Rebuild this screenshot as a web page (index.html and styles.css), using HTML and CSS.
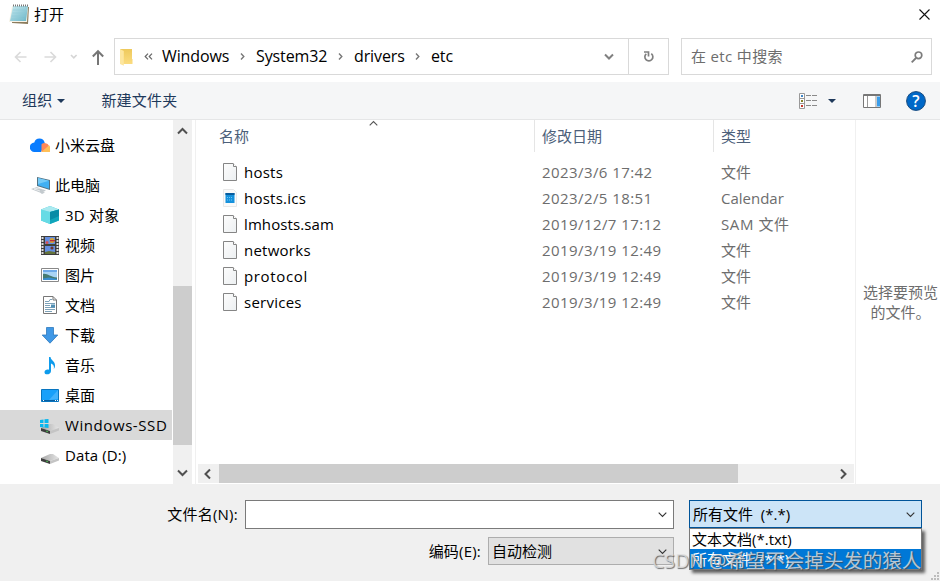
FILE: index.html
```html
<!DOCTYPE html>
<html lang="zh-CN">
<head>
<meta charset="utf-8">
<title>打开</title>
<link rel="stylesheet" href="styles.css">
</head>
<body>
<svg class="defs" width="0" height="0">
  <defs>
    <linearGradient id="paper" x1="0" y1="0" x2="1" y2="1"><stop offset="0" stop-color="#fdfdfd"/><stop offset="1" stop-color="#eceff1"/></linearGradient>
    <linearGradient id="pad" x1="0" y1="0" x2="1" y2="1"><stop offset="0" stop-color="#c9eaf0"/><stop offset="1" stop-color="#68b4c6"/></linearGradient>
    <linearGradient id="gold" x1="0" y1="0" x2="0" y2="1"><stop offset="0" stop-color="#eec95c"/><stop offset="1" stop-color="#fbdc80"/></linearGradient>
    <linearGradient id="metal" x1="0" y1="0" x2="1" y2="0"><stop offset="0" stop-color="#a6a6a6"/><stop offset="1" stop-color="#e6e6e6"/></linearGradient>
    <symbol id="doc" viewBox="0 0 14 18"><path d="M.5.5h9.500l3.500 3.500v13.500h-13z" fill="url(#paper)" stroke="#858585"/><path d="M10.500.5v3h3" fill="#fff" stroke="#858585"/></symbol>
    <symbol id="drive" viewBox="0 0 18 11"><path d="M0 5 9 1h3l6 4-9 3z" fill="url(#metal)"/><path d="M0 5l9 3v3L0 8z" fill="#3d3d3d"/><path d="M9 8l9-3v2.500L9 11z" fill="#c4c4c4"/><path d="M5 7.500l2 .7v1l-2-.7z" fill="#4cba50"/></symbol>
    <symbol id="chev" viewBox="0 0 9 6"><path d="M.7.7l3.800 3.800L8.300.7" fill="none" stroke="currentColor" stroke-width="1.100"/></symbol>
    <symbol id="arrow" viewBox="0 0 11 8"><path d="M1 1.500l4.500 4.500L10 1.500" fill="none" stroke="#505050" stroke-width="2"/></symbol>
    <symbol id="sep" viewBox="0 0 5 7"><path d="M1 .6l2.800 2.900L1 6.400" fill="none" stroke="#777" stroke-width="1.400"/></symbol>
  </defs>
</svg>
<div class="dialog">
  <header class="title">
    <svg class="notepad" width="21" height="20" viewBox="0 0 21 20"><path d="M4 2l16 1-1 17-16-1z" fill="#8b7b5c"/><path d="M3 2h16l-1 16H0z" fill="#f6f3e7"/><path d="M4 2h15l-2 15H1z" fill="url(#pad)"/><path d="M4 6h13M3.500 9h13M3 12h13M2.500 15h13" stroke="#8ecbd7" stroke-width=".6"/><path d="M4 1.500h15" stroke="#777" stroke-width="2" stroke-dasharray="1 1"/></svg>
    <span class="title-text">打开</span>
    <svg class="close" width="11" height="11" viewBox="0 0 11 11"><path d="M.5.5l10 10M10.500.5l-10 10" stroke="#111" stroke-width="1.100"/></svg>
  </header>

  <nav class="nav">
    <svg class="history" width="92" height="18" viewBox="0 0 92 18"><g fill="none"><path d="M12.500 9H1.500M6.500 4l-5 5 5 5M30.500 9h11M36.500 4l5 5-5 5" stroke="#dadada" stroke-width="1.600"/><path d="M57 7l2.800 2.800L62.600 7" stroke="#d5d5d5" stroke-width="1.600"/><path d="M84 17V3.500M78.800 8.500L84 3.200l5.200 5.300" stroke="#767676" stroke-width="2"/></g></svg>
    <div class="address">
      <svg class="folder" width="13" height="18" viewBox="0 0 13 18"><path d="M0 1h12v10h.5v5H3z" fill="url(#gold)"/><path d="M0 1l3.800 2v14.700L0 16z" fill="#fde69f"/></svg>
      <svg class="back" width="9" height="7" viewBox="0 0 9 7"><path d="M4 .6L1.200 3.500 4 6.400M8 .6L5.200 3.500 8 6.400" fill="none" stroke="#666" stroke-width="1.200"/></svg>
      <span class="crumb c-win">Windows</span><svg class="sep" width="5" height="7"><use href="#sep"/></svg>
      <span class="crumb c-sys">System32</span><svg class="sep" width="5" height="7"><use href="#sep"/></svg>
      <span class="crumb c-drv">drivers</span><svg class="sep" width="5" height="7"><use href="#sep"/></svg>
      <span class="crumb c-etc">etc</span>
      <svg class="drop" width="10" height="8" viewBox="0 0 10 8"><path d="M1 1.500l4 4 4-4" fill="none" stroke="#808080" stroke-width="2"/></svg>
      <div class="refresh"><svg width="12" height="13" viewBox="0 0 12 13"><path d="M8.300 3.700a4 4 0 1 1-5 .1" fill="none" stroke="#808080" stroke-width="1.700"/><path d="M1 2h4.500v4.500" fill="none" stroke="#808080" stroke-width="1.700"/></svg></div>
    </div>
    <div class="search"><span>在 etc 中搜索</span><svg width="12" height="12" viewBox="0 0 12 12"><circle cx="7.500" cy="4.300" r="3.300" fill="none" stroke="#7c7c7c" stroke-width="1.700"/><path d="M5 7l-4.300 4.300" stroke="#7c7c7c" stroke-width="1.800"/></svg></div>
  </nav>

  <div class="toolbar">
    <span class="organize">组织</span><i class="tri"></i>
    <span class="newdir">新建文件夹</span>
    <svg class="viewmode" width="18" height="16" viewBox="0 0 18 16"><path d="M.5.5h5v15h-5zM.5 5.500h5M.5 10.500h5" fill="#fff" stroke="#999"/><path d="M7 2.500h5m1 0h5M7 7.500h5m1 0h5M7 12.500h5m1 0h5" stroke="#8a8a8a"/><path d="M2 2h2v2H2z" fill="#3f87c8"/><path d="M2 7h2v2H2z" fill="#85852a"/><path d="M2 12h2v2H2z" fill="#c6382d"/></svg>
    <i class="tri tri-view"></i>
    <svg class="panes" width="18" height="14" viewBox="0 0 18 14"><path d="M.5.5h17v13H.5z" fill="#fff" stroke="#777"/><path d="M1 1.500h16" stroke="#777"/><path d="M4.500 2v11M13 2v11" stroke="#999"/><path d="M14 2.500h3v10h-3z" fill="#3c9eeb"/></svg>
    <svg class="help" width="20" height="20" viewBox="0 0 20 20"><circle cx="10" cy="10" r="9.400" fill="#0068c8" stroke="#174a7e"/><text x="10" y="15.700" text-anchor="middle" class="help-mark">?</text></svg>
  </div>

  <main class="main">
    <aside class="tree">
      <div class="node cloud"><svg width="20" height="14" viewBox="0 0 20 14"><path d="M4.700 14a4.700 4.700 0 0 1-.4-9.400A5.300 5.300 0 0 1 14.600 4.600L15 6l-4 8z" fill="#087cff"/><path d="M11.500 6.200a5 5 0 0 1 7.500 1.500L12.500 14h-1z" fill="#ff8858"/><path d="M11.500 14l7.500-6.500a4 4 0 0 1 .8 6.500z" fill="#ffc058"/></svg><span>小米云盘</span></div>
      <div class="node pc"><svg width="20" height="17" viewBox="0 0 20 17"><path d="M6 0l13 3v10L6 9z" fill="#527283"/><path d="M7 1l11 2.700v8L7 8.300z" fill="#41b0f3"/><path d="M7 1l11 2.700L7 7z" fill="#76cbf7"/><path d="M0 12l6-2 9 3.500-5 2.500zM9 15.500l2-1 3 1-3 1.500z" fill="#c3cace"/><path d="M3 12l5-1 4 1M3 12l6 2" stroke="#fff" stroke-width=".6" fill="none"/></svg><span>此电脑</span></div>
      <div class="node sub"><svg width="18" height="18" viewBox="0 0 18 18"><path d="M0 3.500L9 0l9 3.500v11L9 18l-9-3.500z" fill="#3bc7d8"/><path d="M0 3.500L9 6v12l-9-3.500z" fill="#66dbe5"/><path d="M0 3.500L9 0l9 3.500L9 6z" fill="#aaeaf0"/><path d="M18 3.500L9 6v12l9-3.500z" fill="#10a5bb"/><path d="M9 6l9-2.500V10l-9 4z" fill="#078ba6"/></svg><span class="wide">3D 对象</span></div>
      <div class="node sub"><svg width="18" height="19" viewBox="0 0 18 19"><path d="M0 0h18v19H0z" fill="#3d3d3d"/><path d="M1.500 1v18M16.500 1v18" stroke="#ddd" stroke-width="2" stroke-dasharray="2 1"/><path d="M4 1h10v8H4zM4 10h10v8H4z" fill="#648ee0"/><circle cx="11" cy="4.500" r="2.500" fill="#d8a333"/><path d="M9 4h5v1.300H9z" fill="#bb3040"/><circle cx="6" cy="6.500" r="1.500" fill="#d65258"/><path d="M4 8h10v1H4z" fill="#3e4630"/><circle cx="11" cy="12" r="1.600" fill="#6f3530"/><path d="M4 16l4-1 6 1v2H4z" fill="#65743c"/></svg><span>视频</span></div>
      <div class="node sub"><svg width="18" height="14" viewBox="0 0 18 14"><path d="M.5.5h17v13H.5z" fill="#fff" stroke="#888"/><path d="M2 2h14v10H2z" fill="#a9d4f5"/><path d="M2 2h14v2H2z" fill="#6da9e8"/><path d="M2 6c4-1 7 3 14 3.500V11H2z" fill="#457b72"/><path d="M2 10.500l6-1 8 1.500v1H2z" fill="#398ed0"/></svg><span>图片</span></div>
      <div class="node sub doc-node"><svg width="14" height="18" viewBox="0 0 14 18"><path d="M.5.5h9.500l3.500 3.500v13.500H.5z" fill="#fff" stroke="#777"/><path d="M10 .5v3.500h3.500" fill="none" stroke="#777"/><path d="M2 5.500h4l1-2h2M2 7.500h10M2 9.500h5M2 11.500h10M2 13.500h10M2 15.500h7" stroke="#7da2b9" fill="none"/><path d="M8 8.500h4v3H8z" fill="#5290b5"/></svg><span>文档</span></div>
      <div class="node sub"><svg width="18" height="17" viewBox="0 0 18 17"><path d="M5.500.5h7V8h4.300L9 16.200 1.200 8h4.300z" fill="#3f98e6" stroke="#2e78bd" stroke-width=".8"/></svg><span>下载</span></div>
      <div class="node sub"><svg width="18" height="19" viewBox="0 0 18 19"><path d="M8 1h1.500c.5 3.500 5 4.500 4.500 9-.1 1.500-.8 2.500-1.300 3 1-4-1.200-4.800-2.700-5.500V15c0 4-6.500 4.500-6.500 1.200 0-2.200 2.500-3.200 4.500-2.400z" fill="#0e9bec"/></svg><span>音乐</span></div>
      <div class="node sub"><svg width="18" height="13" viewBox="0 0 18 13"><path d="M.5.5h17v12H.5z" fill="#18a0fa" stroke="#0875c0"/><path d="M17 1v9L8 11z" fill="#42b2fc"/><path d="M1 11.500h16" stroke="#075d9f"/><path d="M2 11.500h1m11 0h1m1 0h1" stroke="#fff"/></svg><span>桌面</span></div>
      <div class="node sub selected"><svg width="19" height="15" viewBox="0 0 19 15"><svg x="1" y="4" width="18" height="11"><use href="#drive"/></svg><path d="M0 1l3.500-.5V4H0zM4.500.3L8.500 0v4h-4zM0 5h3.500v3.500L0 8zM4.500 5h4v4l-4-.4z" fill="#08b7ef"/></svg><span class="ssd">Windows-SSD</span></div>
      <div class="node sub data-node"><svg width="18" height="11"><use href="#drive"/></svg><span class="data">Data (D:)</span></div>
    </aside>
    <div class="vscroll"><svg class="up" width="11" height="8"><use href="#arrow"/></svg><div class="vthumb"></div><svg width="11" height="8"><use href="#arrow"/></svg></div>

    <section class="files">
      <div class="row head"><span>名称</span><span>修改日期</span><span>类型</span><svg class="sort" width="9" height="6"><use href="#chev"/></svg></div>
      <div class="rows">
        <div class="row"><span class="name"><svg width="14" height="18"><use href="#doc"/></svg>hosts</span><span class="date">2023/3/6 17:42</span><span>文件</span></div>
        <div class="row"><span class="name"><svg width="14" height="18" viewBox="0 0 14 18"><path d="M.5.5h10l3 3v14H.5z" fill="#fafafa" stroke="#e8e8e8"/><path d="M2.500 4h9v10h-9z" fill="#1591dc"/><path d="M2.500 4h9v2h-9z" fill="#075c9d"/><path d="M4 8.500h6M4 11h5" stroke="#6fc3f5" stroke-dasharray="1 1"/></svg>hosts.ics</span><span class="date">2023/2/5 18:51</span><span>Calendar</span></div>
        <div class="row"><span class="name tight"><svg width="14" height="18"><use href="#doc"/></svg>lmhosts.sam</span><span class="date">2019/12/7 17:12</span><span class="sam">SAM 文件</span></div>
        <div class="row"><span class="name"><svg width="14" height="18"><use href="#doc"/></svg>networks</span><span class="date">2019/3/19 12:49</span><span>文件</span></div>
        <div class="row"><span class="name loose"><svg width="14" height="18"><use href="#doc"/></svg>protocol</span><span class="date">2019/3/19 12:49</span><span>文件</span></div>
        <div class="row"><span class="name"><svg width="14" height="18"><use href="#doc"/></svg>services</span><span class="date">2019/3/19 12:49</span><span>文件</span></div>
      </div>
      <div class="hscroll"><svg class="left" width="11" height="8"><use href="#arrow"/></svg><div class="hthumb"></div><svg class="right" width="11" height="8"><use href="#arrow"/></svg></div>
    </section>
    <section class="preview"><p>选择要预览<br>的文件。</p></section>
  </main>

  <footer class="footer">
    <div class="line">
      <label class="name-label">文件名(N):</label>
      <div class="combo filename"><svg width="9" height="6"><use href="#chev"/></svg></div>
      <div class="combo filter"><span>所有文件&nbsp; (*.*)</span><svg width="9" height="6"><use href="#chev"/></svg></div>
    </div>
    <div class="line second">
      <label class="enc-label">编码(E):</label>
      <div class="combo encoding"><span>自动检测</span><svg width="9" height="6"><use href="#chev"/></svg></div>
    </div>
    <div class="menu"><div class="option">文本文档(*.txt)</div><div class="option active">所有文件&nbsp; (*.*)</div></div>
    <div class="watermark">CSDN @希望不会掉头发的猿人</div>
    <svg class="grip" width="9" height="9" viewBox="0 0 9 9"><path d="M6 0h2v2H6zM3 3h2v2H3zM6 3h2v2H6zM0 6h2v2H0zM3 6h2v2H3zM6 6h2v2H6z" fill="#bcbcbc"/></svg>
  </footer>
</div>
</body>
</html>
```
FILE: styles.css
```css
* { box-sizing: border-box; }
body { margin: 0; font: 15px/20px "Open Sans", "Noto Sans CJK SC", sans-serif; color: #000; }
svg { display: block; flex: none; }
.defs { position: absolute; }
span, label { white-space: nowrap; }
.dialog { width: 940px; height: 581px; display: flex; flex-direction: column; background: #fff; overflow: hidden; }

.title { height: 38px; display: flex; padding: 4px 10px 0 9px; }
.title-text { margin-left: 4px; }
.close { margin: 5px 0 0 auto; }

.nav { height: 44px; display: flex; align-items: flex-start; padding-left: 14px; }
.history { margin: 10px 8px 0 0; }
.address { width: 555px; height: 37px; border: 1px solid #d9d9d9; display: flex; align-items: center; padding-left: 5px; font-size: 16px; }
.back { margin: 0 9px 0 11px; }
.crumb { padding-bottom: 1px; letter-spacing: -0.12px; }
.c-win { width: 78px; }
.sep { margin-right: 11px; }
.c-sys { width: 82px; }
.c-drv { width: 61px; }
.drop { margin: 1px 14px 0 auto; }
.refresh { width: 40px; align-self: stretch; border-left: 1px solid #d9d9d9; display: flex; align-items: center; justify-content: center; }
.search { width: 251px; height: 37px; margin-left: 12px; border: 1px solid #d9d9d9; display: flex; align-items: center; justify-content: space-between; padding: 0 8px 0 9px; color: #6d6d6d; }
.search span { padding-bottom: 2px; letter-spacing: .35px; }

.toolbar { height: 38px; background: #f5f6f7; border-bottom: 1px solid #e5e6e7; display: flex; align-items: center; padding-left: 22px; color: #1e395b; }
.organize, .newdir { padding-bottom: 2px; letter-spacing: .2px; }
.tri { width: 0; height: 0; border: 4px solid transparent; border-top-color: #1e395b; border-bottom: 0; margin-left: 5px; }
.newdir { margin-left: 36px; }
.viewmode { margin-left: auto; }
.tri-view { margin-left: 11px; }
.panes { margin: 0 25px 0 27px; }
.help { margin-right: 14px; }
.help-mark { font: 600 16px "Open Sans", sans-serif; fill: #fff; }

.main { height: 364px; display: flex; }
.tree { width: 173px; padding-top: 10px; overflow: hidden; }
.node { height: 30px; width: 172px; display: flex; align-items: center; overflow: hidden; }
.cloud { padding-left: 30px; gap: 5px; margin-bottom: 10px; }
.pc { padding-left: 31px; gap: 4px; }
.sub { padding-left: 41px; gap: 6px; }
.wide { letter-spacing: .25px; }
.ssd { letter-spacing: .58px; }
.data { letter-spacing: .1px; }
.doc-node { padding-left: 43px; gap: 8px; }
.selected { background: #d9d9d9; padding-left: 40px; }
.selected svg { margin-top: 2px; }
.data-node svg { margin-top: 7px; }
.vscroll { width: 19px; background: #f0f0f0; display: flex; flex-direction: column; align-items: center; padding: 7px 0; }
.up { transform: rotate(180deg); }
.vthumb { width: 19px; height: 159px; margin: 151px 0 24px; background: #cdcdcd; }

.files { width: 660px; margin-left: 3px; border-left: 1px solid #f0f0f0; display: flex; flex-direction: column; }
.row { height: 26px; display: grid; grid-template-columns: 339px 179px 1fr; align-items: center; color: #6d6d6d; }
.row > span { padding-left: 7px; }
.row > .name { display: flex; align-items: center; padding-left: 27px; gap: 7px; color: #000; letter-spacing: .25px; }
.row > .tight { letter-spacing: .1px; }
.row > .loose { letter-spacing: .65px; }
.date { letter-spacing: .42px; }
.sam { letter-spacing: .6px; }
.head { height: 32px; position: relative; grid-template-columns: 338px 179px 1fr; color: #4c607a; }
.head > span { height: 32px; line-height: 33px; border-left: 1px solid #e5e5e5; }
.head > span:first-child { border: 0; padding-left: 23px; }
.sort { position: absolute; left: 173px; top: 0; transform: rotate(180deg); color: #555; }
.rows { padding-top: 7px; }
.hscroll { margin: auto 1px 1px 2px; height: 19px; background: #f0f0f0; display: flex; align-items: center; padding: 0 5px 0 4px; }
.left { transform: rotate(90deg); }
.right { transform: rotate(-90deg); margin-left: auto; }
.hthumb { width: 519px; height: 19px; margin-left: 6px; background: #cdcdcd; }
.preview { width: 85px; border-left: 1px solid #f0f0f0; display: flex; align-items: center; justify-content: center; color: #6d6d6d; }
.preview p { margin: 0 0 0 5px; text-align: center; white-space: nowrap; }

.footer { height: 97px; position: relative; background: #f0f0f0; padding-top: 16px; }
.line { display: flex; align-items: center; height: 29px; }
.second { margin-top: 8px; height: 28px; }
.name-label { width: 245px; text-align: right; padding: 0 7px 1px 0; letter-spacing: .25px; }
.enc-label { width: 488px; text-align: right; padding-right: 7px; letter-spacing: .2px; }
.combo { display: flex; align-items: center; border: 1px solid #7a7a7a; background: #fff; height: 29px; padding: 0 6px 0 3px; color: #333; }
.combo svg { margin: 1px 0 0 auto; }
.combo span { color: #000; }
.filename { width: 429px; }
.filter { width: 233px; height: 28px; margin: -1px 0 0 15px; border-color: #005499; background: #cce4f7; }
.encoding { width: 186px; height: 28px; border-color: #adadad; background: #e1e1e1; }
.menu { position: absolute; left: 689px; top: 44px; width: 233px; height: 42px; border: 1px solid #7a7a7a; background: #fff; box-shadow: 3px 3px 3px rgba(0,0,0,.6); }
.option { height: 20px; padding-left: 2px; white-space: nowrap; }
.active { background: #0078d7; color: #fff; }
.watermark { position: absolute; left: 652px; top: 65px; font-size: 19.5px; line-height: 24px; white-space: nowrap; color: rgba(225,225,225,.8); text-shadow: 1px 1px 1px rgba(70,70,70,.75); }
.grip { position: absolute; right: 0; bottom: 0; }
```
